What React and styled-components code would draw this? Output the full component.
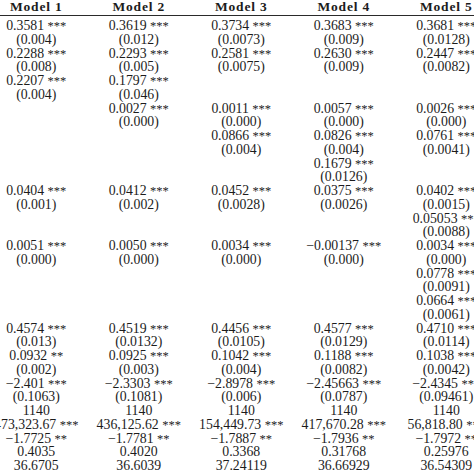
import styled, { createGlobalStyle } from "styled-components";

const GlobalStyle = createGlobalStyle`
  html, body {
    margin: 0;
    padding: 0;
    background: #fff;
  }
`;

const Page = styled.div`
  width: 474px;
  height: 474px;
  overflow: hidden;
  background: #fff;
  color: #1c1c1c;
  font-family: "Liberation Serif", "Times New Roman", serif;
`;

// the label column of the table is cut off on the left
const Table = styled.div`
  display: flex;
  flex-direction: column;
  width: 520px;
  margin-left: -15px;
`;

const HeaderRow = styled.div`
  display: grid;
  grid-template-columns: repeat(5, 102.5px);
  height: 15px;
  border-bottom: 1px solid #2a2a2a;
  align-items: end;
`;

const HeaderCell = styled.div`
  text-align: center;
  font-weight: bold;
  font-size: 13.5px;
  letter-spacing: 0.8px;
  line-height: 13px;
  padding-bottom: 2px;
`;

const Body = styled.div`
  display: flex;
  flex-direction: column;
  padding-top: 3px;
`;

const Row = styled.div`
  display: grid;
  grid-template-columns: repeat(5, 102.5px);
  height: 13.75px;
  line-height: 13.75px;
  font-size: 13.8px;
`;

const Cell = styled.div`
  text-align: center;
  white-space: nowrap;
`;

const Stars = styled.span`
  font-size: 12.5px;
`;

const M = "\u2212";

const rows = [
  ["0.3581 ***", "0.3619 ***", "0.3734 ***", "0.3683 ***", "0.3681 ***"],
  ["(0.004)", "(0.012)", "(0.0073)", "(0.009)", "(0.0128)"],
  ["0.2288 ***", "0.2293 ***", "0.2581 ***", "0.2630 ***", "0.2447 ***"],
  ["(0.008)", "(0.005)", "(0.0075)", "(0.009)", "(0.0082)"],
  ["0.2207 ***", "0.1797 ***", "", "", ""],
  ["(0.004)", "(0.046)", "", "", ""],
  ["", "0.0027 ***", "0.0011 ***", "0.0057 ***", "0.0026 ***"],
  ["", "(0.000)", "(0.000)", "(0.000)", "(0.000)"],
  ["", "", "0.0866 ***", "0.0826 ***", "0.0761 ***"],
  ["", "", "(0.004)", "(0.004)", "(0.0041)"],
  ["", "", "", "0.1679 ***", ""],
  ["", "", "", "(0.0126)", ""],
  ["0.0404 ***", "0.0412 ***", "0.0452 ***", "0.0375 ***", "0.0402 ***"],
  ["(0.001)", "(0.002)", "(0.0028)", "(0.0026)", "(0.0015)"],
  ["", "", "", "", "0.05053 ***"],
  ["", "", "", "", "(0.0088)"],
  ["0.0051 ***", "0.0050 ***", "0.0034 ***", M + "0.00137 ***", "0.0034 ***"],
  ["(0.000)", "(0.000)", "(0.000)", "(0.000)", "(0.000)"],
  ["", "", "", "", "0.0778 ***"],
  ["", "", "", "", "(0.0091)"],
  ["", "", "", "", "0.0664 ***"],
  ["", "", "", "", "(0.0061)"],
  ["0.4574 ***", "0.4519 ***", "0.4456 ***", "0.4577 ***", "0.4710 ***"],
  ["(0.013)", "(0.0132)", "(0.0105)", "(0.0129)", "(0.0114)"],
  ["0.0932 **", "0.0925 ***", "0.1042 ***", "0.1188 ***", "0.1038 ***"],
  ["(0.002)", "(0.003)", "(0.004)", "(0.0082)", "(0.0042)"],
  [M + "2.401 ***", M + "2.3303 ***", M + "2.8978 ***", M + "2.45663 ***", M + "2.4345 ***"],
  ["(0.1063)", "(0.1081)", "(0.006)", "(0.0787)", "(0.09461)"],
  ["1140", "1140", "1140", "1140", "1140"],
  ["473,323.67 ***", "436,125.62 ***", "154,449.73 ***", "417,670.28 ***", "56,818.80 ***"],
  [M + "1.7725 **", M + "1.7781 **", M + "1.7887 **", M + "1.7936 **", M + "1.7972 **"],
  ["0.4035", "0.4020", "0.3368", "0.31768", "0.25976"],
  ["36.6705", "36.6039", "37.24119", "36.66929", "36.54309"],
];

const Value = ({ text }) => {
  const idx = text.indexOf(" *");
  if (idx < 0) return text;
  return (
    <>
      {text.slice(0, idx + 1)}
      <Stars>{text.slice(idx + 1)}</Stars>
    </>
  );
};

const App = () => {
  return (
    <Page>
      <GlobalStyle />
      <Table>
        <HeaderRow>
          {[1, 2, 3, 4, 5].map((n) => (
            <HeaderCell key={n}>Model {n}</HeaderCell>
          ))}
        </HeaderRow>
        <Body>
          {rows.map((r, i) => (
            <Row key={i}>
              {r.map((c, j) => (
                <Cell key={j}>
                  <Value text={c} />
                </Cell>
              ))}
            </Row>
          ))}
        </Body>
      </Table>
    </Page>
  );
};

export default App;
